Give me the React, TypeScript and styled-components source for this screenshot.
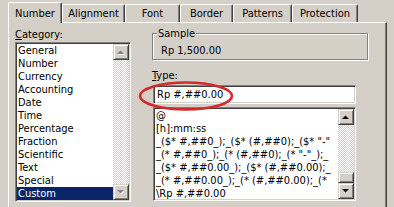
import React from 'react';
import styled, { createGlobalStyle } from 'styled-components';

const FACE = '#d4d0c8';
const SHADOW = '#808080';
const DARK = '#404040';

const GlobalStyle = createGlobalStyle`
  html, body {
    margin: 0;
    padding: 0;
    background: ${FACE};
  }
  body {
    font-family: "DejaVu Sans Condensed", "DejaVu Sans", sans-serif;
    font-stretch: condensed;
    font-size: 11px;
    color: #000;
  }
`;

const Dialog = styled.div`
  position: relative;
  width: 394px;
  height: 207px;
  overflow: hidden;
  background: ${FACE};
`;

const TabStrip = styled.div`
  display: flex;
  align-items: flex-end;
  height: 22px;
  padding-left: 8px;
`;

const Tab = styled.div<{ $w: number; $active?: boolean }>`
  box-sizing: border-box;
  position: relative;
  z-index: ${(p) => (p.$active ? 1 : 0)};
  width: ${(p) => p.$w}px;
  height: ${(p) => (p.$active ? 21 : 18)}px;
  margin-bottom: ${(p) => (p.$active ? -1 : 0)}px;
  padding-top: ${(p) => (p.$active ? 4 : 2)}px;
  line-height: 13px;
  text-align: center;
  background: ${FACE};
  border-top: 1px solid #fff;
  border-left: 1px solid #fff;
  border-right: 1px solid ${DARK};
  border-radius: 2px 2px 0 0;
  box-shadow: inset -1px 0 ${SHADOW};
`;

const Panel = styled.div`
  box-sizing: border-box;
  display: flex;
  margin-left: 8px;
  width: 379px;
  height: 190px;
  padding: 4px 0 0 6px;
  border-top: 1px solid #fff;
  border-left: 1px solid #fff;
  border-right: 1px solid ${DARK};
  box-shadow: inset -1px 0 ${SHADOW};
`;

const LeftColumn = styled.div`
  display: flex;
  flex-direction: column;
  width: 116px;
`;

const RightColumn = styled.div`
  display: flex;
  flex-direction: column;
  width: 217px;
  margin-left: 21px;
`;

const FieldLabel = styled.div<{ $top: number }>`
  line-height: 13px;
  margin-top: ${(p) => p.$top}px;
`;

const Accel = styled.span`
  text-decoration: underline;
`;

const Sunken = styled.div`
  box-sizing: border-box;
  background: #fff;
  border: 1px solid;
  border-color: ${SHADOW} #fff #fff ${SHADOW};
  box-shadow: inset 1px 1px ${DARK}, inset -1px -1px ${FACE};
`;

const ListBox = styled(Sunken)<{ $h: number; $top: number; $w?: number; $indent?: number }>`
  display: flex;
  width: ${(p) => (p.$w ? `${p.$w}px` : 'auto')};
  height: ${(p) => p.$h}px;
  margin-top: ${(p) => p.$top}px;
  margin-left: ${(p) => p.$indent ?? 0}px;
  padding: 1px;
`;

const Rows = styled.div`
  flex: 1;
  min-width: 0;
  overflow: hidden;
`;

const Row = styled.div<{ $selected?: boolean }>`
  height: 13px;
  line-height: 13px;
  padding-left: 1px;
  white-space: pre;
  overflow: hidden;
  background: ${(p) => (p.$selected ? '#0a246a' : 'transparent')};
  color: ${(p) => (p.$selected ? '#fff' : '#000')};
`;

const ScrollBar = styled.div`
  display: flex;
  flex-direction: column;
  flex: none;
  width: 16px;
`;

const Raised = styled.div<{ $h: number }>`
  box-sizing: border-box;
  display: flex;
  align-items: center;
  justify-content: center;
  flex: none;
  height: ${(p) => p.$h}px;
  background: ${FACE};
  border: 1px solid;
  border-color: ${FACE} ${DARK} ${DARK} ${FACE};
  box-shadow: inset 1px 1px #fff, inset -1px -1px ${SHADOW};
`;

const Track = styled.div`
  flex: 1;
  background-image: repeating-conic-gradient(#fff 0 25%, ${FACE} 0 50%);
  background-size: 2px 2px;
`;

const GroupBox = styled.fieldset`
  box-sizing: border-box;
  margin: 0;
  width: 216px;
  padding: 0 0 2px 4px;
  border: 1px solid ${SHADOW};
  box-shadow: inset 1px 1px #fff, 1px 1px #fff;
`;

const GroupCaption = styled.legend`
  padding: 0 1px;
  line-height: 13px;
  background: ${FACE};
`;

const SampleValue = styled.div`
  line-height: 13px;
  padding: 4px 0 0 4px;
`;

const TypeInput = styled(Sunken)`
  width: 203px;
  height: 19px;
  margin: 3px 0 0 1px;
  padding: 2px 0 0 3px;
  line-height: 13px;
`;

const Annotation = styled.svg`
  position: absolute;
  left: 138px;
  top: 80px;
  pointer-events: none;
`;

const Arrow: React.FC<{ up?: boolean; disabled?: boolean }> = ({ up, disabled }) => {
  const pts = up ? '0,4 7,4 3.5,0.5' : '0,0 7,0 3.5,3.5';
  return (
    <svg width="8" height="5" viewBox="0 0 8 5">
      {disabled && <polygon points={pts} fill="#fff" transform="translate(1,1)" />}
      <polygon points={pts} fill={disabled ? SHADOW : '#000'} />
    </svg>
  );
};

const tabs = [
  { label: 'Number', w: 54, active: true },
  { label: 'Alignment', w: 63 },
  { label: 'Font', w: 55 },
  { label: 'Border', w: 53 },
  { label: 'Patterns', w: 59 },
  { label: 'Protection', w: 66 },
];

const categories = [
  'General',
  'Number',
  'Currency',
  'Accounting',
  'Date',
  'Time',
  'Percentage',
  'Fraction',
  'Scientific',
  'Text',
  'Special',
  'Custom',
];

// only the part of each format that shows left of the scroll bar
const formats = [
  '@',
  '[h]:mm:ss',
  '_($* #,##0_);_($* (#,##0);_($* "-"',
  '_(* #,##0_);_(* (#,##0);_(* "-"_);_',
  '_($* #,##0.00_);_($* (#,##0.00);_',
  '_(* #,##0.00_);_(* (#,##0.00);_(*',
  '\\Rp #,##0.00',
];

export default function App() {
  return (
    <Dialog>
      <GlobalStyle />
      <TabStrip>
        {tabs.map((t) => (
          <Tab key={t.label} $w={t.w} $active={t.active}>
            {t.label}
          </Tab>
        ))}
      </TabStrip>
      <Panel>
        <LeftColumn>
          <FieldLabel $top={1}>
            <Accel>C</Accel>ategory:
          </FieldLabel>
          <ListBox $h={160} $top={1}>
            <Rows>
              {categories.map((c) => (
                <Row key={c} $selected={c === 'Custom'}>
                  {c}
                </Row>
              ))}
            </Rows>
            <ScrollBar>
              <Raised $h={16}>
                <Arrow up disabled />
              </Raised>
              <Track />
              <Raised $h={16}>
                <Arrow disabled />
              </Raised>
            </ScrollBar>
          </ListBox>
        </LeftColumn>
        <RightColumn>
          <GroupBox>
            <GroupCaption>Sample</GroupCaption>
            <SampleValue>Rp 1,500.00</SampleValue>
          </GroupBox>
          <FieldLabel $top={9}>
            <Accel>T</Accel>ype:
          </FieldLabel>
          <TypeInput>Rp #,##0.00</TypeInput>
          <ListBox $h={94} $top={3} $w={203} $indent={1}>
            <Rows>
              {formats.map((f) => (
                <Row key={f}>{f}</Row>
              ))}
            </Rows>
            <ScrollBar>
              <Raised $h={16}>
                <Arrow up />
              </Raised>
              <Track />
              <Raised $h={11} />
              <Raised $h={16}>
                <Arrow />
              </Raised>
            </ScrollBar>
          </ListBox>
        </RightColumn>
      </Panel>
      <Annotation width="98" height="32" viewBox="0 0 98 32">
        <ellipse cx="48" cy="16" rx="46" ry="13.5" fill="none" stroke="#d42a2e" strokeWidth="2.6" />
      </Annotation>
    </Dialog>
  );
}
